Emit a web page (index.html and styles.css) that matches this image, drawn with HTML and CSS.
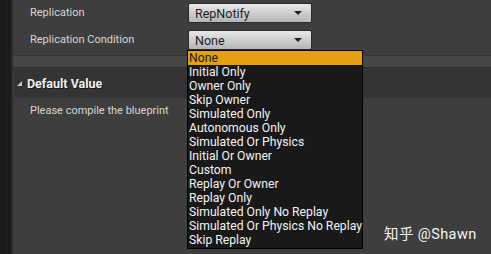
FILE: index.html
```html
<!DOCTYPE html>
<html>
<head>
<meta charset="utf-8">
<link rel="stylesheet" href="styles.css">
</head>
<body>
<div class="gutter"><div class="gline"></div></div>
<div class="panel">
  <div class="row">
    <div class="label">Replication</div>
    <div class="combo"><span>RepNotify</span><i class="arrow"></i></div>
  </div>
  <div class="row">
    <div class="label">Replication Condition</div>
    <div class="combo"><span>None</span><i class="arrow"></i></div>
  </div>
  <div class="sep"></div>
  <div class="category"><i class="tri"></i><span>Default Value</span></div>
  <div class="note">Please compile the blueprint</div>
</div>
<ul class="menu">
  <li class="sel">None</li>
  <li>Initial Only</li>
  <li>Owner Only</li>
  <li>Skip Owner</li>
  <li>Simulated Only</li>
  <li>Autonomous Only</li>
  <li>Simulated Or Physics</li>
  <li>Initial Or Owner</li>
  <li>Custom</li>
  <li>Replay Or Owner</li>
  <li>Replay Only</li>
  <li>Simulated Only No Replay</li>
  <li>Simulated Or Physics No Replay</li>
  <li>Skip Replay</li>
</ul>
<div class="mark">知乎 @Shawn</div>
</body>
</html>
```
FILE: styles.css
```css
html, body {
  margin: 0;
  padding: 0;
}
body {
  width: 491px;
  height: 254px;
  overflow: hidden;
  background: #3e3e3e;
  display: flex;
  font-family: Roboto, "Liberation Sans", "Noto Sans CJK SC", sans-serif;
  position: relative;
}
.gutter {
  width: 11px;
  background: #1b1b1b;
  border-right: 2px solid #2c2c2c;
  position: relative;
  flex: none;
}
.gline {
  position: absolute;
  left: 6px;
  top: 0;
  bottom: 0;
  width: 1px;
  background: #262626;
}
.panel {
  flex: 1;
  display: flex;
  flex-direction: column;
}
.row {
  height: 27px;
  display: flex;
  align-items: flex-start;
  padding-top: 3px;
  box-sizing: border-box;
}
.row + .row {
  height: 28px;
}
.label {
  width: 158px;
  padding-left: 17px;
  line-height: 19px;
  font-size: 11px;
  color: #d6d6d6;
}
.combo {
  height: 20px;
  border: 1px solid #2a2a2a;
  border-radius: 2px;
  background: linear-gradient(#e8e8e8, #c9c9c9 60%, #b6b6b6);
  display: flex;
  align-items: center;
  justify-content: space-between;
  padding: 0 9px 0 6px;
  box-sizing: border-box;
  width: 124px;
  font-size: 12.5px;
  color: #1e1e1e;
}
.arrow {
  width: 0;
  height: 0;
  border-left: 4px solid transparent;
  border-right: 4px solid transparent;
  border-top: 4px solid #202020;
}
.sep {
  height: 11px;
  border-top: 1px solid #343434;
  border-bottom: 1px solid #2e2e2e;
  background: #474747;
}
.category {
  height: 30px;
  margin-left: 1px;
  background: #343434;
  border-radius: 3px 0 0 3px;
  display: flex;
  align-items: center;
  font-size: 12.5px;
  font-weight: bold;
  color: #f0f0f0;
  text-shadow: 1px 1px 0 #151515;
}
.tri {
  width: 0;
  height: 0;
  margin: 0 5px 0 3px;
  border-left: 5px solid transparent;
  border-bottom: 5px solid #c8c8c8;
}
.note {
  padding: 6px 0 0 17px;
  font-size: 11px;
  color: #d6d6d6;
}
.menu {
  position: absolute;
  left: 187px;
  top: 50px;
  width: 176px;
  margin: 0;
  padding: 0;
  list-style: none;
  background: #191919;
  border: 1px solid #000;
  box-sizing: border-box;
  padding: 0 0 1px 0;
}
.menu li {
  height: 14px;
  line-height: 14px;
  padding-left: 1px;
  font-size: 12.2px;
  color: #f2f2f2;
  white-space: nowrap;
}
.menu li.sel {
  background: #e4a010;
  color: #1a1a1a;
}
.mark {
  position: absolute;
  left: 384px;
  top: 222px;
  font-size: 14.5px;
  color: #f4f4f4;
  letter-spacing: 0.4px;
}
```
